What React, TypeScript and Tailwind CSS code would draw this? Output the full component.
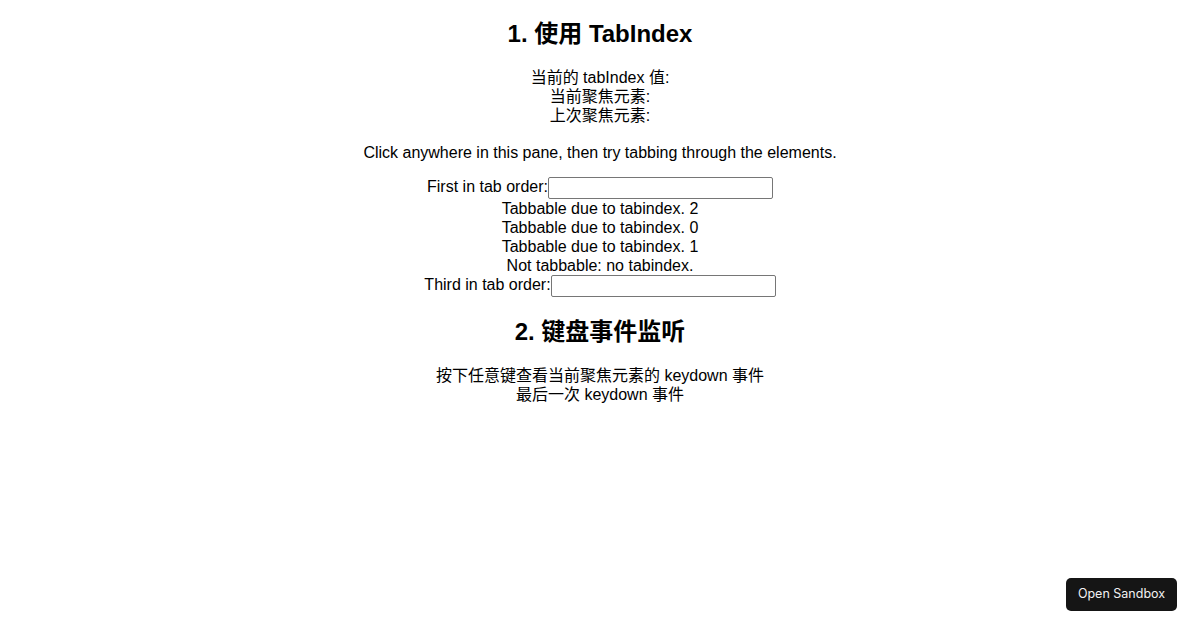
export default function App() {
  const font = { fontFamily: '"Liberation Sans", "Noto Sans CJK SC", Arial, sans-serif' };

  return (
    <div className="min-h-[630px] bg-white text-black text-center text-[16px]" style={font}>
      <h2 className="text-[24px] font-bold leading-[28px] pt-[20px] mb-[20px]">1. 使用 TabIndex</h2>

      <div className="leading-[19px]">
        <div>当前的 tabIndex 值:</div>
        <div>当前聚焦元素:</div>
        <div>上次聚焦元素:</div>
      </div>

      <p className="leading-[19px] mt-[18px] mb-[15px]">
        Click anywhere in this pane, then try tabbing through the elements.
      </p>

      <div className="leading-[19px]">
        <label className="flex items-start justify-center h-[22px]">
          First in tab order:
          <input
            type="text"
            tabIndex={1}
            className="w-[225px] h-[22px] border border-[#767676] rounded-[2px] bg-white"
          />
        </label>
        <div tabIndex={2}>Tabbable due to tabindex. 2</div>
        <div tabIndex={0}>Tabbable due to tabindex. 0</div>
        <div tabIndex={1}>Tabbable due to tabindex. 1</div>
        <div>Not tabbable: no tabindex.</div>
        <label className="flex items-start justify-center h-[22px]">
          Third in tab order:
          <input
            type="text"
            className="w-[225px] h-[22px] border border-[#767676] rounded-[2px] bg-white"
          />
        </label>
      </div>

      <h2 className="text-[24px] font-bold leading-[28px] mt-[21px] mb-[20px]">2. 键盘事件监听</h2>

      <div className="leading-[19px]">
        <div>按下任意键查看当前聚焦元素的 keydown 事件</div>
        <div>最后一次 keydown 事件</div>
      </div>

      <button
        className="fixed right-[23px] bottom-[19px] w-[111px] h-[33px] rounded-[5px] bg-[#151515] text-[#f2f2f2] text-[12.5px]"
        style={{ fontFamily: 'Inter, "Liberation Sans", sans-serif' }}
      >
        Open Sandbox
      </button>
    </div>
  );
}
